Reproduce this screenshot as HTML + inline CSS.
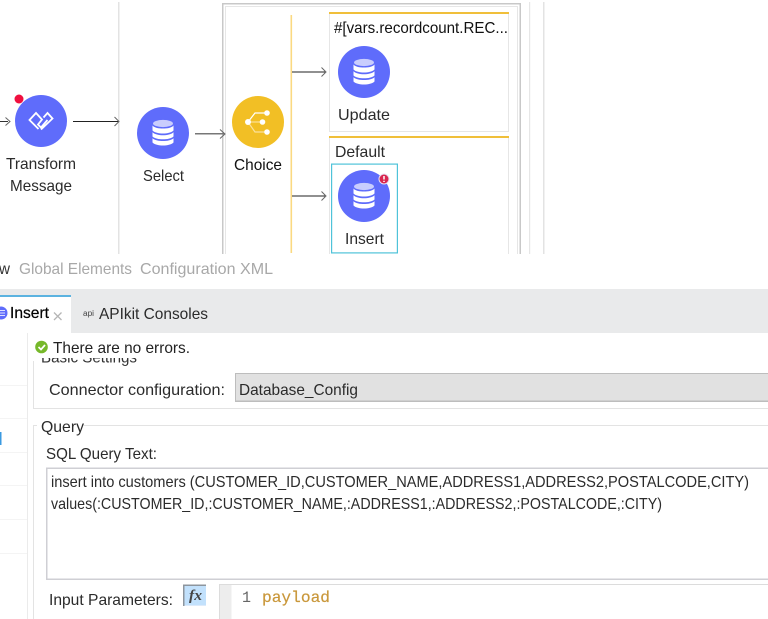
<!DOCTYPE html>
<html><head><meta charset="utf-8"><style>
html,body{margin:0;padding:0;background:#fff;width:768px;height:619px;overflow:hidden}
svg{display:block;filter:blur(.35px)}
text{font-family:"Liberation Sans",sans-serif;font-size:16px;fill:#2b2b2b}
.m{font-family:"Liberation Mono",monospace}
</style></head><body>
<svg width="768" height="619" viewBox="0 0 768 619" xmlns="http://www.w3.org/2000/svg">
<defs>
<g id="db">
<ellipse cx="0" cy="-9.500" rx="10" ry="3.600" fill="#c9cdfd"/>
<path d="M-10.500-7.500C-8.500-5-4-4.500 0-4.500S8.500-5 10.500-7.500V-2.500C8.500-.5 4 .5 0 .5S-8.500-.5-10.500-2.500ZM-10.500-.8C-8.500 1.200-4 2.200 0 2.200S8.500 1.200 10.500-.8V3.500C8.500 5.500 4 6.300 0 6.300S-8.500 5.500-10.500 3.500ZM-10.500 5.200C-8.500 7.200-4 8 0 8S8.500 7.200 10.500 5.200V9.500C8.500 11.500 4 12.500 0 12.500S-8.500 11.500-10.500 9.500Z" fill="#fff"/>
</g>
</defs>

<!-- canvas lines -->
<rect x="118" y="2" width="1.500" height="252" fill="#e3e3e3"/>
<rect x="222" y="3" width="299" height="251" fill="#c8c8c8"/>
<rect x="223.500" y="4.500" width="296" height="249.500" fill="#fff"/>
<rect x="225" y="6" width="293" height="248" fill="#e6e6e6"/>
<rect x="226" y="7" width="291" height="247" fill="#fff"/>
<rect x="529" y="2" width="1.200" height="252" fill="#e6e6e6"/>
<rect x="543" y="2" width="1.500" height="252" fill="#e3e3e3"/>
<rect x="290.500" y="15" width="1.600" height="238" fill="#fbd981"/>

<!-- arrows -->
<rect x="0" y="121" width="8" height="1" fill="#333"/><path d="M5.500 117.500L10 121.500 5.500 125.500" stroke="#666" fill="none"/>
<rect x="73" y="121" width="46" height="1" fill="#222"/><path d="M114.500 117L119 121.500 114.500 126" stroke="#666" fill="none"/>
<rect x="195" y="133" width="29" height="1.500" fill="#777"/><path d="M220 129.500L225 134 220 138.500" stroke="#666" fill="none"/>
<rect x="292" y="71.500" width="33" height="1" fill="#222"/><path d="M321.500 67.500L326 72 321.500 76.500" stroke="#666" fill="none"/>
<rect x="292" y="195.500" width="33" height="1" fill="#222"/><path d="M321.500 191.500L326 196 321.500 200.500" stroke="#666" fill="none"/>

<!-- Transform -->
<circle cx="41" cy="121" r="26" fill="#5f6cfb"/>
<circle cx="19" cy="99" r="4.500" fill="#f00f3f"/>
<path d="M38.500 129L29.500 120 36 113 42 119.500 38 124.500 41 127.500 47.500 120M41 129.500L52.500 118.500 47.500 113 43.500 117.500" fill="none" stroke="#fff" stroke-width="1.800"/>
<text x="6" y="169" textLength="70" lengthAdjust="spacingAndGlyphs">Transform</text>
<text x="10" y="191" textLength="62" lengthAdjust="spacingAndGlyphs">Message</text>

<!-- Select -->
<circle cx="163" cy="133" r="26" fill="#5f6cfb"/>
<use href="#db" x="163" y="133"/>
<text x="143" y="181" textLength="41" lengthAdjust="spacingAndGlyphs">Select</text>

<!-- Choice -->
<circle cx="258" cy="122" r="26" fill="#f2bf25"/>
<path d="M248 122L255 113H267" fill="none" stroke="#fff" stroke-width="1.200"/>
<path d="M248 122H262" fill="none" stroke="#fbe19a" stroke-width="1.200"/>
<path d="M248 122L255 132H267" fill="none" stroke="#fbe19a" stroke-width="1.200"/>
<circle cx="248" cy="122" r="3" fill="#fff"/><circle cx="267" cy="113" r="2.800" fill="#fff"/><circle cx="262.500" cy="122" r="2.800" fill="#fff"/><circle cx="267" cy="132" r="2.800" fill="#fff"/>
<text x="234" y="170" textLength="48" lengthAdjust="spacingAndGlyphs" style="fill:#111">Choice</text>

<!-- Box 1 -->
<rect x="329" y="13" width="180" height="119" fill="#e6e6e6"/>
<rect x="330" y="14" width="178" height="117" fill="#fff"/>
<rect x="329" y="12" width="180" height="2" fill="#f0bf3a"/>
<text x="334" y="33" textLength="174" lengthAdjust="spacingAndGlyphs" style="fill:#111">#[vars.recordcount.REC...</text>
<circle cx="364" cy="72" r="26" fill="#5f6cfb"/>
<use href="#db" x="364" y="72"/>
<text x="338" y="120" textLength="52" lengthAdjust="spacingAndGlyphs">Update</text>

<!-- Box 2 -->
<rect x="329" y="137" width="180" height="117" fill="#e6e6e6"/>
<rect x="330" y="138" width="178" height="116" fill="#fff"/>
<rect x="329" y="136" width="180" height="2" fill="#f0bf3a"/>
<text x="335" y="157" textLength="50" lengthAdjust="spacingAndGlyphs">Default</text>
<rect x="331" y="163.500" width="67" height="90" fill="#4fc3d9"/>
<rect x="332.200" y="164.700" width="64.600" height="87.600" fill="#fff"/>
<circle cx="364" cy="196" r="26" fill="#5f6cfb"/>
<use href="#db" x="364" y="196"/>
<circle cx="384" cy="179" r="5.500" fill="#e8e4f4"/><circle cx="384" cy="179" r="4.500" fill="#d9264f"/>
<path d="M384 176V179.500M384 180.800V182" stroke="#fff" stroke-width="1.500"/>
<text x="345" y="244" textLength="39" lengthAdjust="spacingAndGlyphs">Insert</text>

<!-- tab labels under canvas -->
<text x="-1" y="274" textLength="11" lengthAdjust="spacingAndGlyphs" style="fill:#333">w</text>
<text x="19" y="274" textLength="113" lengthAdjust="spacingAndGlyphs" style="fill:#a8a8a8">Global Elements</text>
<text x="140" y="274" textLength="133" lengthAdjust="spacingAndGlyphs" style="fill:#a8a8a8">Configuration XML</text>

<!-- tab bar -->
<rect x="0" y="289" width="768" height="44" fill="#e9eaeb"/>
<rect x="0" y="295" width="71" height="38" fill="#fff"/>
<rect x="0" y="295" width="71" height="2" fill="#5cb3e0"/>
<circle cx="1" cy="313" r="6.500" fill="#5f6cfb"/><path d="M-3 310.500H5M-3 313H5M-3 315.500H5" stroke="#dfe2ff" stroke-width="1"/>
<text x="10" y="318" textLength="39" lengthAdjust="spacingAndGlyphs" style="fill:#000;stroke:#000;stroke-width:.2">Insert</text>
<path d="M54 312.500L61.500 320M61.500 312.500L54 320" stroke="#b5b5b5" stroke-width="1.300"/>
<text x="83" y="316" textLength="11" lengthAdjust="spacingAndGlyphs" style="font-size:8px;fill:#444">api</text>
<text x="99" y="319" textLength="109" lengthAdjust="spacingAndGlyphs">APIkit Consoles</text>

<!-- sidebar -->
<rect x="27" y="333" width="1" height="286" fill="#ebebeb"/>
<rect x="0" y="385" width="27" height="1" fill="#f4f4f4"/>
<rect x="0" y="418" width="27" height="1" fill="#f4f4f4"/>
<rect x="0" y="452" width="27" height="1" fill="#f4f4f4"/>
<rect x="0" y="485" width="27" height="1" fill="#f4f4f4"/>
<rect x="0" y="519" width="27" height="1" fill="#f4f4f4"/>
<rect x="0" y="553" width="27" height="1" fill="#f4f4f4"/>
<rect x="0" y="432" width="1.500" height="13" fill="#3b9ae0"/>

<!-- basic settings -->
<rect x="33" y="361" width="1" height="48" fill="#e3e3e3"/>
<rect x="33" y="408" width="735" height="1" fill="#e3e3e3"/>
<text x="41" y="362.500" textLength="96" lengthAdjust="spacingAndGlyphs" style="fill:#333">Basic Settings</text>
<rect x="30" y="334" width="738" height="24" fill="#fff"/>
<circle cx="41.500" cy="347" r="6.300" fill="#76b82a"/>
<path d="M38.500 347L41 349.500 45 345" fill="none" stroke="#fff" stroke-width="1.700"/>
<text x="53" y="353" textLength="137" lengthAdjust="spacingAndGlyphs" style="fill:#222">There are no errors.</text>

<text x="49" y="395" textLength="176" lengthAdjust="spacingAndGlyphs">Connector configuration:</text>
<rect x="235" y="373" width="533" height="29" fill="#bdbdbd"/>
<rect x="236" y="374" width="532" height="26.500" fill="#e1e1e1"/>
<text x="239" y="395" textLength="119" lengthAdjust="spacingAndGlyphs">Database_Config</text>

<!-- query -->
<rect x="84" y="425" width="684" height="1" fill="#e3e3e3"/>
<rect x="33" y="425" width="4" height="1" fill="#e3e3e3"/>
<rect x="33" y="425" width="1" height="194" fill="#e3e3e3"/>
<text x="41" y="432" textLength="43" lengthAdjust="spacingAndGlyphs">Query</text>
<text x="46" y="459" textLength="111" lengthAdjust="spacingAndGlyphs">SQL Query Text:</text>
<rect x="46" y="467.500" width="722" height="112.500" fill="#cfcfd4"/>
<rect x="47.500" y="469" width="720.500" height="109.500" fill="#fff"/>
<text x="51" y="487" textLength="698" lengthAdjust="spacingAndGlyphs">insert into customers (CUSTOMER_ID,CUSTOMER_NAME,ADDRESS1,ADDRESS2,POSTALCODE,CITY)</text>
<text x="51" y="509" textLength="611" lengthAdjust="spacingAndGlyphs">values(:CUSTOMER_ID,:CUSTOMER_NAME,:ADDRESS1,:ADDRESS2,:POSTALCODE,:CITY)</text>

<text x="49" y="605" textLength="124" lengthAdjust="spacingAndGlyphs">Input Parameters:</text>
<rect x="183" y="584.500" width="23" height="21.500" fill="#8d959d"/>
<rect x="184.500" y="586" width="21.500" height="20" fill="#c2e1fc"/>
<rect x="184.500" y="605" width="21.500" height="1" fill="#dceafa"/>
<text x="189" y="600" textLength="13" lengthAdjust="spacingAndGlyphs" style="font-family:'Liberation Serif',serif;font-style:italic;font-weight:bold;font-size:15px;fill:#444">fx</text>
<rect x="219" y="584" width="549" height="35" fill="#dcdcdc"/>
<rect x="220" y="585" width="548" height="34" fill="#fff"/>
<rect x="220" y="585" width="11.500" height="34" fill="#ededed"/>
<text class="m" x="242" y="602" textLength="9" lengthAdjust="spacingAndGlyphs" style="fill:#666">1</text>
<text class="m" x="262" y="602" textLength="68" lengthAdjust="spacingAndGlyphs" style="fill:#c9973a;stroke:#c9973a;stroke-width:.2">payload</text>
</svg>
</body></html>
